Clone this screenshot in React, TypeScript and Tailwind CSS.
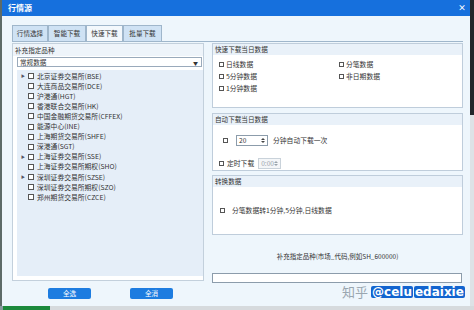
import React from "react";

const F = { fontFamily: '"Noto Sans CJK SC", "Noto Sans", sans-serif' };

function Box({ size = 6 }: { size?: number }) {
  return (
    <span
      className="inline-block shrink-0 border border-[#555] bg-white"
      style={{ width: size, height: size }}
    />
  );
}

const tree: [string, boolean][] = [
  ["北京证券交易所(BSE)", true],
  ["大连商品交易所(DCE)", false],
  ["沪港通(HGT)", false],
  ["香港联合交易所(HK)", false],
  ["中国金融期货交易所(CFFEX)", false],
  ["能源中心(INE)", false],
  ["上海期货交易所(SHFE)", false],
  ["深港通(SGT)", false],
  ["上海证券交易所(SSE)", true],
  ["上海证券交易所期权(SHO)", false],
  ["深圳证券交易所(SZSE)", true],
  ["深圳证券交易所期权(SZO)", false],
  ["郑州期货交易所(CZCE)", false],
];

function Group({
  title,
  className,
  children,
}: {
  title: string;
  className: string;
  children: React.ReactNode;
}) {
  return (
    <div className={`flex flex-col border border-[#bfcddb] bg-white ${className}`}>
      <div className="flex h-[11px] shrink-0 items-center bg-[#e9f1f9] pl-[2px] text-[6.6px] leading-none text-[#333]">
        {title}
      </div>
      {children}
    </div>
  );
}

function Spin({ value, w, disabled }: { value: string; w: number; disabled?: boolean }) {
  const c = disabled ? "#9aa3ab" : "#444";
  return (
    <div
      className={`flex h-[11px] items-center justify-between border pl-[2px] pr-[2px] text-[6.6px] leading-none ${
        disabled ? "border-[#c9d2da] bg-[#f4f6f8] text-[#9aa3ab]" : "border-[#8c9cab] bg-white text-[#333]"
      }`}
      style={{ width: w }}
    >
      <span>{value}</span>
      <svg width="4" height="7" viewBox="0 0 4 7">
        <path d="M0 3 L2 1 L4 3 Z" fill={c} />
        <path d="M0 4 L2 6 L4 4 Z" fill={c} />
      </svg>
    </div>
  );
}

export default function App() {
  return (
    <div className="relative h-[310px] w-[474px] overflow-hidden bg-[#d3d8dc]" style={F}>
      <div className="flex h-[306px]">
        <div className="w-[2px] bg-[#5d6b68]" />
        <div className="flex w-[468px] flex-col bg-[#eef6fc]">
          {/* title bar */}
          <div className="flex h-[16px] shrink-0 items-center justify-between bg-[#1670dd] pl-[6px] pr-[4px]">
            <span className="text-[8px] font-bold leading-none text-white">行情源</span>
            <span className="text-[8px] font-bold leading-none text-white">×</span>
          </div>
          {/* tabs */}
          <div className="ml-[10px] mt-[9px] flex h-[16px] items-end">
            {["行情选择", "智能下载", "快速下载", "批量下载"].map((t, i) => (
              <div
                key={t}
                className={`flex h-[16px] items-center justify-center border border-b-0 border-[#9fb6cb] text-[6.6px] leading-none text-[#333] ${
                  i === 2 ? "bg-[#f3f8fc]" : "bg-[#cfe2f4]"
                }`}
                style={{ width: [36, 38, 37, 39][i] }}
              >
                {t}
              </div>
            ))}
          </div>
          <div className="ml-[10px] mr-[7px] h-px bg-[#9fb6cb]" />
          {/* content */}
          <div className="ml-[10px] mt-[1px] flex gap-[8px]">
            {/* left group */}
            <div className="flex h-[238px] w-[192px] flex-col border border-[#c3d0dc] bg-white">
              <div className="flex h-[12px] items-center bg-[#eef4fa] pl-[2px] text-[6.6px] leading-none text-[#333]">
                补充指定品种
              </div>
              <div className="ml-[4px] mt-[1px] flex h-[10px] w-[185px] items-center justify-between border border-[#9aaabb] bg-white pl-[2px] pr-[3px] text-[6.6px] leading-none text-[#333]">
                <span>常规数据</span>
                <span className="text-[5px]">▼</span>
              </div>
              <div className="ml-[4px] mt-[3px] h-[206px] w-[186px] bg-[#e5eef8] pt-[1px]">
                {tree.map(([name, arrow]) => (
                  <div key={name} className="flex h-[10.1px] items-center text-[6.8px] leading-none text-[#333]">
                    <span className="w-[11px] pl-[4px] text-[4px] text-[#556]">{arrow ? "▶" : ""}</span>
                    <Box size={6} />
                    <span className="ml-[3px]">{name}</span>
                  </div>
                ))}
              </div>
            </div>
            {/* right column */}
            <div className="flex w-[251px] flex-col">
              <Group title="快速下载当日数据" className="h-[65px]">
                <div className="grid grid-cols-[120px_1fr] pl-[6px] pt-[3px] text-[6.8px] leading-none text-[#333]">
                  {[
                    ["日线数据", "分笔数据"],
                    ["5分钟数据", "非日期数据"],
                    ["1分钟数据", ""],
                  ].map((r) => (
                    <React.Fragment key={r[0]}>
                      <div className="flex h-[12px] items-center gap-[2px]">
                        <Box size={5} />
                        {r[0]}
                      </div>
                      <div className="flex h-[12px] items-center gap-[2px]">
                        {r[1] && <Box size={5} />}
                        {r[1]}
                      </div>
                    </React.Fragment>
                  ))}
                </div>
              </Group>
              <Group title="自动下载当日数据" className="mt-[5px] h-[58px]">
                <div className="pt-[9px] text-[6.8px] leading-none text-[#333]">
                  <div className="flex h-[12px] items-center pl-[10px]">
                    <Box size={5} />
                    <div className="ml-[8px]">
                      <Spin value="20" w={32} />
                    </div>
                    <span className="ml-[5px]">分钟自动下载一次</span>
                  </div>
                  <div className="mt-[11px] flex h-[12px] items-center pl-[6px]">
                    <Box size={5} />
                    <span className="ml-[3px]">定时下载</span>
                    <div className="ml-[4px]">
                      <Spin value="0:00" w={23} disabled />
                    </div>
                  </div>
                </div>
              </Group>
              <Group title="转换数据" className="mt-[4px] h-[60px]">
                <div className="mt-[18px] flex h-[10px] items-center pl-[7px] text-[6.8px] leading-none text-[#333]">
                  <Box size={5} />
                  <span className="ml-[7px]">分笔数据转1分钟,5分钟,日线数据</span>
                </div>
              </Group>
              <div className="mt-[16px] flex h-[10px] items-center justify-center text-[6.5px] leading-none text-[#333]">
                补充指定品种(市场_代码,例如SH_600000)
              </div>
              <div className="mt-[12px] h-[10px] w-[250px] border border-[#8c9cab] bg-white" />
            </div>
          </div>
          {/* buttons + watermark */}
          <div className="relative mt-[4px] flex h-[12px] items-center">
            <div className="ml-[46px] flex h-[11px] w-[43px] items-center justify-center rounded-[2px] bg-[#1d7ce0] text-[6.6px] leading-none text-white">
              全选
            </div>
            <div className="ml-[39px] flex h-[11px] w-[43px] items-center justify-center rounded-[2px] bg-[#1d7ce0] text-[6.6px] leading-none text-white">
              全消
            </div>
            <div className="absolute left-[340px] top-[-2px] flex items-center">
              <span className="text-[13px] leading-none text-[#9aa6b0]">知乎</span>
              <span
                className="ml-[3px] rounded-[2px] bg-[#1264cf] px-[1px] text-[12px] font-bold leading-[12px] text-white"
                style={{ fontFamily: '"DejaVu Sans", sans-serif' }}
              >
                @celu
              </span>
              <span
                className="ml-[1px] rounded-[2px] bg-[#1264cf] px-[1px] text-[12px] font-bold leading-[12px] text-white"
                style={{ fontFamily: '"DejaVu Sans", sans-serif' }}
              >
                edaixie
              </span>
            </div>
          </div>
        </div>
        <div className="flex w-[4px] flex-col">
          <div className="h-[115px] bg-[#22272c]" />
          <div className="flex-1 bg-[#dde2e6]" />
        </div>
      </div>
      <div className="flex h-[4px]">
        <div className="w-[3px] bg-[#8a9aa0]" />
        <div className="w-[47px] bg-[#1c8a3c]" />
        <div className="flex-1 bg-[#d6dadd]" />
      </div>
    </div>
  );
}
